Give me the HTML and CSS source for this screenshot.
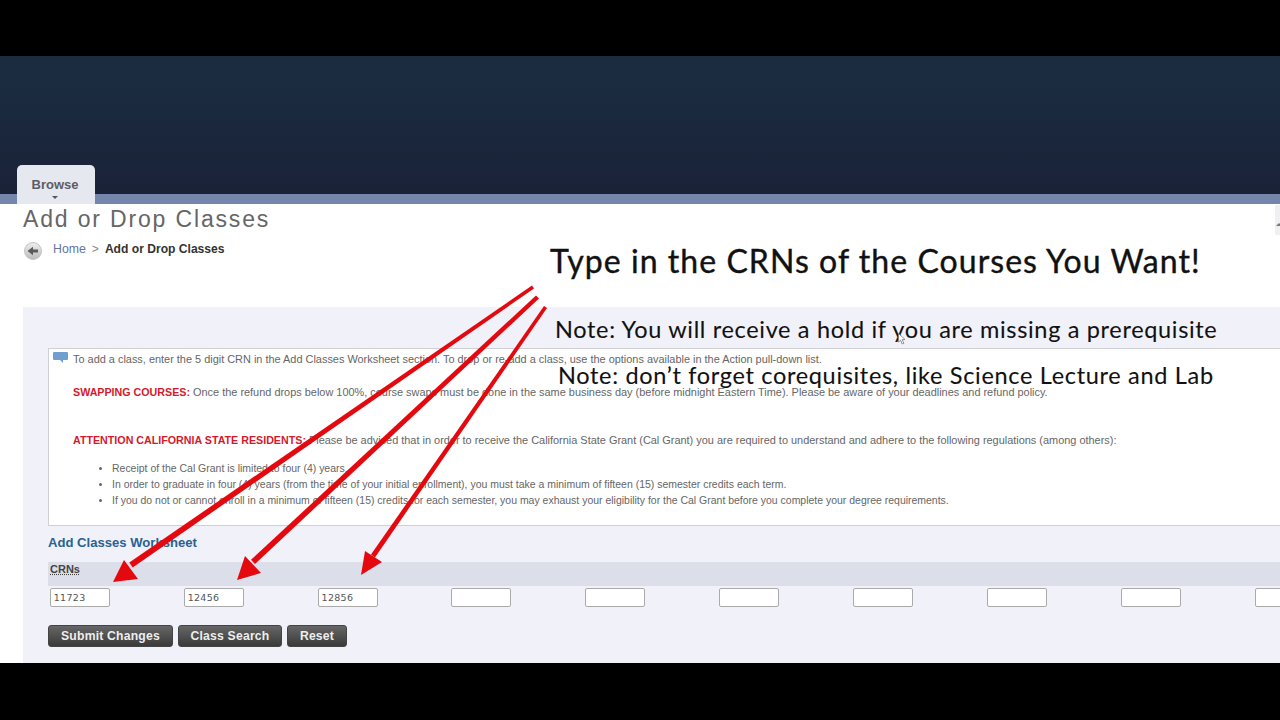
FILE: index.html
```html
<!DOCTYPE html>
<html lang="en">
<head>
<meta charset="utf-8">
<title>Add or Drop Classes</title>
<link rel="stylesheet" href="styles.css">
</head>
<body>
<div class="frame">
  <div class="letterbox-top"></div>
  <header class="masthead">
    <div class="tab">Browse<span class="caret"></span></div>
  </header>
  <main class="page">
    <h1 class="title">Add or Drop Classes</h1>
    <nav class="crumbs">
      <span class="back"><svg viewBox="0 0 18 18" width="18" height="18"><defs><linearGradient id="g" x1="0" y1="0" x2="0" y2="1"><stop offset="0" stop-color="#eee"/><stop offset="1" stop-color="#bbb"/></linearGradient></defs><circle cx="9" cy="9" r="8.5" fill="url(#g)" stroke="#c4c4c4"/><path d="M3.5 9 L9 4.8 V7.4 H14 V10.6 H9 V13.2 Z" fill="#5a5a5a"/></svg></span>
      <a class="home">Home</a><span class="sep">&gt;</span><b>Add or Drop Classes</b>
    </nav>
    <section class="panel">
      <div class="info">
        <p class="first"><svg class="bubble" viewBox="0 0 15 11" width="15" height="11"><path d="M1 0 H14 Q15 0 15 1 V7 Q15 8 14 8 H10 L10 11 L7 8 H1 Q0 8 0 7 V1 Q0 0 1 0 Z" fill="#6f9fcf"/></svg>To add a class, enter the 5 digit CRN in the Add Classes Worksheet section. To drop or re-add a class, use the options available in the Action pull-down list.</p>
        <p class="swap"><strong>SWAPPING COURSES:</strong> Once the refund drops below 100%, course swaps must be done in the same business day (before midnight Eastern Time). Please be aware of your deadlines and refund policy.</p>
        <p class="attn"><strong>ATTENTION CALIFORNIA STATE RESIDENTS:</strong> Please be advised that in order to receive the California State Grant (Cal Grant) you are required to understand and adhere to the following regulations (among others):</p>
        <ul>
          <li>Receipt of the Cal Grant is limited to four (4) years.</li>
          <li>In order to graduate in four (4) years (from the time of your initial enrollment), you must take a minimum of fifteen (15) semester credits each term.</li>
          <li>If you do not or cannot enroll in a minimum of fifteen (15) credits for each semester, you may exhaust your eligibility for the Cal Grant before you complete your degree requirements.</li>
        </ul>
      </div>
      <h2 class="sheet">Add Classes Worksheet</h2>
      <div class="crn-head"><span>CRNs</span></div>
      <div class="crn-row">
        <input class="crn" value="11723"><input class="crn" value="12456"><input class="crn" value="12856"><input class="crn"><input class="crn"><input class="crn"><input class="crn"><input class="crn"><input class="crn"><input class="crn">
      </div>
      <div class="actions">
        <button class="btn btn-submit">Submit Changes</button><button class="btn btn-search">Class Search</button><button class="btn btn-reset">Reset</button>
      </div>
    </section>
    <div class="scroll-hint"></div>
    <svg class="arrows" viewBox="0 0 1280 459" width="1280" height="459">
      <g fill="#e3090f">
        <polygon points="532,81.5 534,84.5 132.7,363.5 129.3,358.5"/>
        <polygon points="113,378 124,356 138,375"/>
        <polygon points="536,91.5 539,94.5 255,360 251,355.8"/>
        <polygon points="237,376 245,352 261,369"/>
        <polygon points="544,102 547,104 375,353.4 371,350.6"/>
        <polygon points="361,371 365,347 382,358"/>
      </g>
    </svg>
    <p class="note note-main">Type in the CRNs of the Courses You Want!</p>
    <p class="note note-hold">Note: You will receive a hold if you are missing a prerequisite</p>
    <p class="note note-co">Note: don’t forget corequisites, like Science Lecture and Lab</p>
    <svg class="cursor" viewBox="0 0 8 12" width="8" height="12"><path d="M0.5 0.5 L0.5 9 L2.6 7.2 L4.2 11 L5.8 10.3 L4.2 6.6 L7 6.5 Z" fill="#fff" stroke="#777" stroke-width="0.8"/></svg>
  </main>
  <div class="letterbox-bottom"></div>
</div>
</body>
</html>
```
FILE: styles.css
```css
* { box-sizing: border-box; }
html, body { margin: 0; padding: 0; background: #000; }
body { width: 1280px; height: 720px; overflow: hidden; font-family: "Liberation Sans", Arial, sans-serif; }
.frame { display: flex; flex-direction: column; height: 720px; }
.letterbox-top { height: 56px; background: #000; flex: none; }
.letterbox-bottom { height: 57px; background: #000; flex: none; }
.masthead {
  height: 148px; flex: none; display: flex; align-items: flex-end; padding-left: 17px;
  background: linear-gradient(to bottom, #1c2c40 0, #1a2a3f 40px, #1a2238 138px, #7486ab 138px, #7486ab 148px);
}
.tab {
  width: 78px; height: 39px; background: #e6e8f0; border-radius: 5px 5px 0 0;
  color: #5c5c66; font-size: 13px; font-weight: 700; text-align: center; padding: 12px 2px 0 0;
  display: flex; flex-direction: column; align-items: center;
}
.caret { width: 0; height: 0; margin-top: 4px; border: 3px solid transparent; border-top-color: #555; border-bottom: 0; }
.page { position: relative; height: 459px; flex: none; background: #fff; padding-left: 23px; overflow: hidden; }
.title { margin: 4px 0 0; font-size: 23px; font-weight: 400; letter-spacing: 1.84px; line-height: 22px; color: #666; }
.crumbs { display: flex; align-items: center; margin-top: 10px; height: 18px; font-size: 12.1px; color: #333; }
.back { width: 18px; height: 18px; margin: 4px 11px 0 1px; display: block; }
.back svg { display: block; }
.home { color: #64759c; font-size: 12.3px; }
.sep { color: #888; margin: 0 6px; }
.crumbs b { color: #333; }
.panel { margin-top: 49px; height: 357px; background: #f1f1f9; padding: 41px 0 0 25px; }
.info { height: 178px; background: #fff; border: 1px solid #d0d0d4; border-right: 0; font-size: 10.93px; color: #666; position: relative; }
.info p { margin: 0; line-height: 14px; white-space: nowrap; }
.first { padding: 3px 0 0 24px; }
.bubble { position: absolute; left: 4px; top: 3px; }
.swap { padding: 19px 0 0 24px; }
.attn { padding: 34px 0 0 24px; }
.info strong { color: #d4192c; font-size: 10.7px; }
.info ul { margin: 14px 0 0; padding: 0 0 0 63px; font-size: 10.47px; }
.info li { line-height: 16px; white-space: nowrap; }
.sheet { margin: 9px 0 0; height: 16px; font-size: 13.1px; line-height: 16px; font-weight: 700; color: #2b6290; }
.crn-head { margin-top: 11px; height: 24px; background: #dcdfea; padding: 0 0 0 2px; }
.crn-head span { font-size: 11px; font-weight: 700; color: #444; text-decoration: underline dotted; line-height: 14px; display: block; }
.crn-row { display: flex; gap: 73.9px; margin-top: 2px; padding-left: 1.75px; }
.crn {
  width: 60px; height: 19px; flex: none; border: 1px solid #aaa; border-radius: 2px; background: #fff; padding: 0 3px;
  font-family: "DejaVu Sans", sans-serif; font-size: 9.5px; letter-spacing: 0.3px; color: #555; outline: 0;
}
.actions { display: flex; gap: 5px; margin-top: 18px; }
.btn {
  height: 22px; border: 1px solid #444; border-radius: 3px; padding: 0; color: #eee;
  background: linear-gradient(to bottom, #666, #3a3a3a);
  font-family: "Liberation Sans", sans-serif; font-size: 12.2px; font-weight: 700; letter-spacing: 0.2px;
}
.btn-submit { width: 125px; }
.btn-search { width: 104px; }
.btn-reset { width: 60px; }
.scroll-hint { position: absolute; right: 0; top: 1px; width: 5px; height: 30px; background: #f0f0f3; }
.scroll-hint::after { content: ""; position: absolute; left: 1px; top: 18px; border: 3px solid transparent; border-bottom-color: #777; border-top: 0; }
.arrows { position: absolute; left: 0; top: 0; }
.note { position: absolute; margin: 0; font-family: Lato, sans-serif; color: #111; white-space: nowrap; }
.note-main { left: 550px; top: 37px; font-size: 32px; line-height: 40px; letter-spacing: 1.05px; -webkit-text-stroke: 0.4px #111; }
.note-hold { left: 555px; top: 111px; font-size: 23.5px; line-height: 28px; letter-spacing: 0.67px; -webkit-text-stroke: 0.1px #111; }
.note-co { left: 558px; top: 157px; font-size: 23.5px; line-height: 28px; letter-spacing: 0.68px; -webkit-text-stroke: 0.1px #111; }
.cursor { position: absolute; left: 898px; top: 129px; }
```
